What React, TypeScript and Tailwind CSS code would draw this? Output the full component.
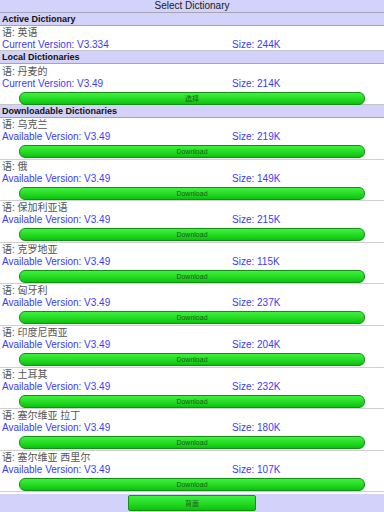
const local = { name: "语: 丹麦的", version: "V3.49", size: "214K" };

const downloads = [
  { name: "语: 乌克兰", size: "219K" },
  { name: "语: 俄", size: "149K" },
  { name: "语: 保加利亚语", size: "215K" },
  { name: "语: 克罗地亚", size: "115K" },
  { name: "语: 匈牙利", size: "237K" },
  { name: "语: 印度尼西亚", size: "204K" },
  { name: "语: 土耳其", size: "232K" },
  { name: "语: 塞尔维亚 拉丁", size: "180K" },
  { name: "语: 塞尔维亚 西里尔", size: "107K" },
];

function SectionHeader({ title }: { title: string }) {
  return (
    <div className="flex h-[13px] items-center border-b border-[#a4a4b4] bg-[#d2d2fa] pl-[2px] text-[9px] font-bold leading-none text-[#101010]">
      {title}
    </div>
  );
}

function InfoLines({ name, label, size }: { name: string; label: string; size: string }) {
  return (
    <>
      <div className="flex h-[12px] items-center pl-[2px] text-[10px] leading-none text-[#555555]">{name}</div>
      <div className="flex h-[12px] items-center text-[10px] leading-none text-[#3c3cf2]">
        <span className="w-[232px] pl-[2px]">{label}</span>
        <span>Size: {size}</span>
      </div>
    </>
  );
}

function GreenButton({ label }: { label: string }) {
  return (
    <button
      type="button"
      className="mx-auto flex h-[13px] w-[346px] items-center justify-center rounded-[6px] border border-[#149014] bg-gradient-to-b from-[#3cf23c] to-[#06c406] text-[7px] leading-none text-[#1f5a1f]"
    >
      {label}
    </button>
  );
}

export default function App() {
  return (
    <div
      className="flex h-[512px] w-[384px] flex-col overflow-hidden bg-white"
      style={{ fontFamily: '"Liberation Sans", "Noto Sans CJK SC", sans-serif' }}
    >
      <div className="flex-1 overflow-hidden">
        <div className="flex h-[13px] items-center justify-center border-b border-[#a4a4b4] bg-[#d2d2fa] text-[10px] leading-none text-[#202020]">
          Select Dictionary
        </div>

        <SectionHeader title="Active Dictionary" />
        <div className="h-[25px] border-b border-[#c4c4c4] pt-[1px]">
          <InfoLines name="语: 英语" label="Current Version: V3.334" size="244K" />
        </div>

        <SectionHeader title="Local Dictionaries" />
        <div className="h-[41px] border-b border-[#c4c4c4] pt-[2px]">
          <InfoLines name={local.name} label={`Current Version: ${local.version}`} size={local.size} />
          <div className="mt-[2px]">
            <GreenButton label="选择" />
          </div>
        </div>

        <SectionHeader title="Downloadable Dictionaries" />
        {downloads.map((d) => (
          <div key={d.name} className="h-[41.6px] border-b border-[#d0d0d0] pt-[1px]">
            <InfoLines name={d.name} label="Available Version: V3.49" size={d.size} />
            <div className="mt-[2px]">
              <GreenButton label="Download" />
            </div>
          </div>
        ))}
      </div>

      <div className="flex h-[18px] shrink-0 items-center justify-center bg-[#d2d2fa]">
        <button
          type="button"
          className="flex h-[16px] w-[128px] items-center justify-center rounded-[2px] border border-[#149014] bg-gradient-to-b from-[#3cf23c] to-[#06c406] text-[7px] leading-none text-[#1f5a1f]"
        >
          背面
        </button>
      </div>
    </div>
  );
}
